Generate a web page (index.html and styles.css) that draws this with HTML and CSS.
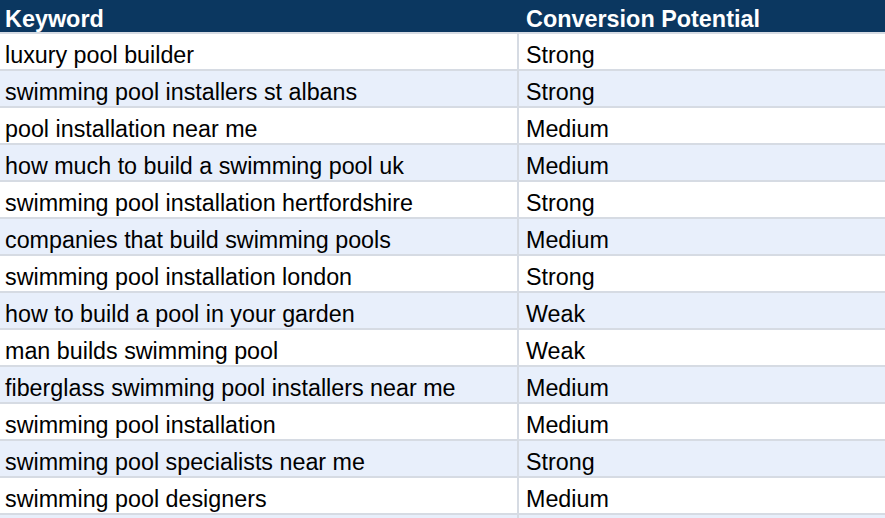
FILE: index.html
```html
<!DOCTYPE html>
<html>
<head>
<meta charset="utf-8">
<link rel="stylesheet" href="styles.css">
</head>
<body>
<div class="sheet">
  <div class="row head"><div class="cell c1">Keyword</div><div class="cell c2">Conversion Potential</div></div>
  <div class="row"><div class="cell c1">luxury pool builder</div><div class="cell c2">Strong</div></div>
  <div class="row alt"><div class="cell c1">swimming pool installers st albans</div><div class="cell c2">Strong</div></div>
  <div class="row"><div class="cell c1">pool installation near me</div><div class="cell c2">Medium</div></div>
  <div class="row alt"><div class="cell c1">how much to build a swimming pool uk</div><div class="cell c2">Medium</div></div>
  <div class="row"><div class="cell c1">swimming pool installation hertfordshire</div><div class="cell c2">Strong</div></div>
  <div class="row alt"><div class="cell c1">companies that build swimming pools</div><div class="cell c2">Medium</div></div>
  <div class="row"><div class="cell c1">swimming pool installation london</div><div class="cell c2">Strong</div></div>
  <div class="row alt"><div class="cell c1">how to build a pool in your garden</div><div class="cell c2">Weak</div></div>
  <div class="row"><div class="cell c1">man builds swimming pool</div><div class="cell c2">Weak</div></div>
  <div class="row alt"><div class="cell c1">fiberglass swimming pool installers near me</div><div class="cell c2">Medium</div></div>
  <div class="row"><div class="cell c1">swimming pool installation</div><div class="cell c2">Medium</div></div>
  <div class="row alt"><div class="cell c1">swimming pool specialists near me</div><div class="cell c2">Strong</div></div>
  <div class="row"><div class="cell c1">swimming pool designers</div><div class="cell c2">Medium</div></div>
  <div class="row alt"><div class="cell c1"></div><div class="cell c2"></div></div>
</div>
</body>
</html>
```
FILE: styles.css
```css
html, body {
  margin: 0;
  padding: 0;
  background: #ffffff;
}
.sheet {
  font-family: "Liberation Sans", Arial, sans-serif;
  font-size: 23.3px;
  color: #000000;
  width: 885px;
  height: 518px;
  overflow: hidden;
}
.row {
  display: grid;
  grid-template-columns: 519px 1fr;
  height: 35px;
  border-bottom: 2px solid #d6dbe3;
  background: #ffffff;
}
.row.alt {
  background: #e8effb;
}
.row.head {
  height: 32px;
  background: #0b3760;
  color: #ffffff;
  font-weight: bold;
  font-size: 23.4px;
}
.cell {
  display: flex;
  align-items: flex-end;
  padding: 0 0 1px 0;
  white-space: nowrap;
  overflow: hidden;
  line-height: 26px;
}
.c1 {
  padding-left: 5px;
  border-right: 2px solid #d6dbe3;
}
.c2 {
  padding-left: 7px;
}
.head .c1 {
  border-right-color: #0b3760;
}
.head .cell {
  padding-bottom: 0;
}
```
